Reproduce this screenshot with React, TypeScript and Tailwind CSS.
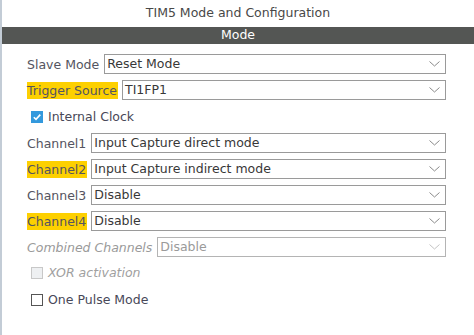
import React from 'react';

type SelectRowProps = {
  label: string;
  value: string;
  highlight?: boolean;
  disabled?: boolean;
};

const Chevron = ({ disabled }: { disabled?: boolean }) => (
  <svg width="11" height="6" viewBox="0 0 11 6" className="shrink-0">
    <path
      d="M0.5 0.5 L5.5 5 L10.5 0.5"
      fill="none"
      stroke={disabled ? '#c4c4c4' : '#8a8a8a'}
      strokeWidth="1"
    />
  </svg>
);

const SelectRow: React.FC<SelectRowProps> = ({ label, value, highlight, disabled }) => (
  <div className="flex items-center h-5 gap-[4px]">
    <span
      className={
        'leading-[17px] whitespace-nowrap pr-[1px] ' +
        (highlight ? 'bg-[#fdd000] text-[#4a4a4a] ' : '') +
        (disabled ? 'italic text-[#9a9a9a]' : 'text-[#545460]')
      }
    >
      {label}
    </span>
    <div
      className={
        'flex-1 h-5 flex items-center justify-between pl-[2px] pr-[5px] border ' +
        (disabled ? 'border-[#b4b4b4] text-[#9a9a9a]' : 'border-[#9a9a9a] text-[#383838]')
      }
    >
      <span className="whitespace-nowrap">{value}</span>
      <Chevron disabled={disabled} />
    </div>
  </div>
);

const CheckRow = ({
  label,
  checked,
  disabled,
}: {
  label: string;
  checked?: boolean;
  disabled?: boolean;
}) => (
  <div className="flex items-center h-5 pl-[4px] gap-[5px]">
    {checked ? (
      <span className="w-[12px] h-[12px] bg-[#3399dd] flex items-center justify-center">
        <svg width="10" height="10" viewBox="0 0 10 10">
          <path d="M1.8 5.2 L4 7.4 L8.3 2.6" fill="none" stroke="#ffffff" strokeWidth="1.6" />
        </svg>
      </span>
    ) : (
      <span
        className={
          'w-[12px] h-[12px] border ' +
          (disabled ? 'border-[#c8c8c8] bg-[#eef0f2]' : 'border-[#555555] bg-white')
        }
      />
    )}
    <span className={disabled ? 'italic text-[#a0a0a0]' : 'text-[#484858]'}>{label}</span>
  </div>
);

export default function App() {
  return (
    <div
      className="w-[474px] h-[335px] bg-white flex overflow-hidden text-[12.5px]"
      style={{ fontFamily: '"DejaVu Sans", "Liberation Sans", sans-serif' }}
    >
      {/* left strip */}
      <div className="w-[2px] h-full bg-[#c3ccd6] shrink-0" />

      <div className="flex-1 flex flex-col">
        {/* Title */}
        <div className="h-[27px] flex items-center justify-center text-[#484848]">
          TIM5 Mode and Configuration
        </div>

        {/* Section bar */}
        <div className="h-[17px] bg-[#545654] flex items-center justify-center text-white">
          Mode
        </div>

        {/* Content */}
        <div className="flex flex-col gap-[6px] pl-[25px] pr-[28px] pt-[10px]">
          <SelectRow label="Slave Mode" value="Reset Mode" />
          <SelectRow label="Trigger Source" value="TI1FP1" highlight />
          <div className="pt-[1px]">
            <CheckRow label="Internal Clock" checked />
          </div>
          <SelectRow label="Channel1" value="Input Capture direct mode" />
          <SelectRow label="Channel2" value="Input Capture indirect mode" highlight />
          <SelectRow label="Channel3" value="Disable" />
          <SelectRow label="Channel4" value="Disable" highlight />
          <SelectRow label="Combined Channels" value="Disable" disabled />
          <CheckRow label="XOR activation" disabled />
          <div className="pt-[1px]">
            <CheckRow label="One Pulse Mode" />
          </div>
        </div>
      </div>
    </div>
  );
}
